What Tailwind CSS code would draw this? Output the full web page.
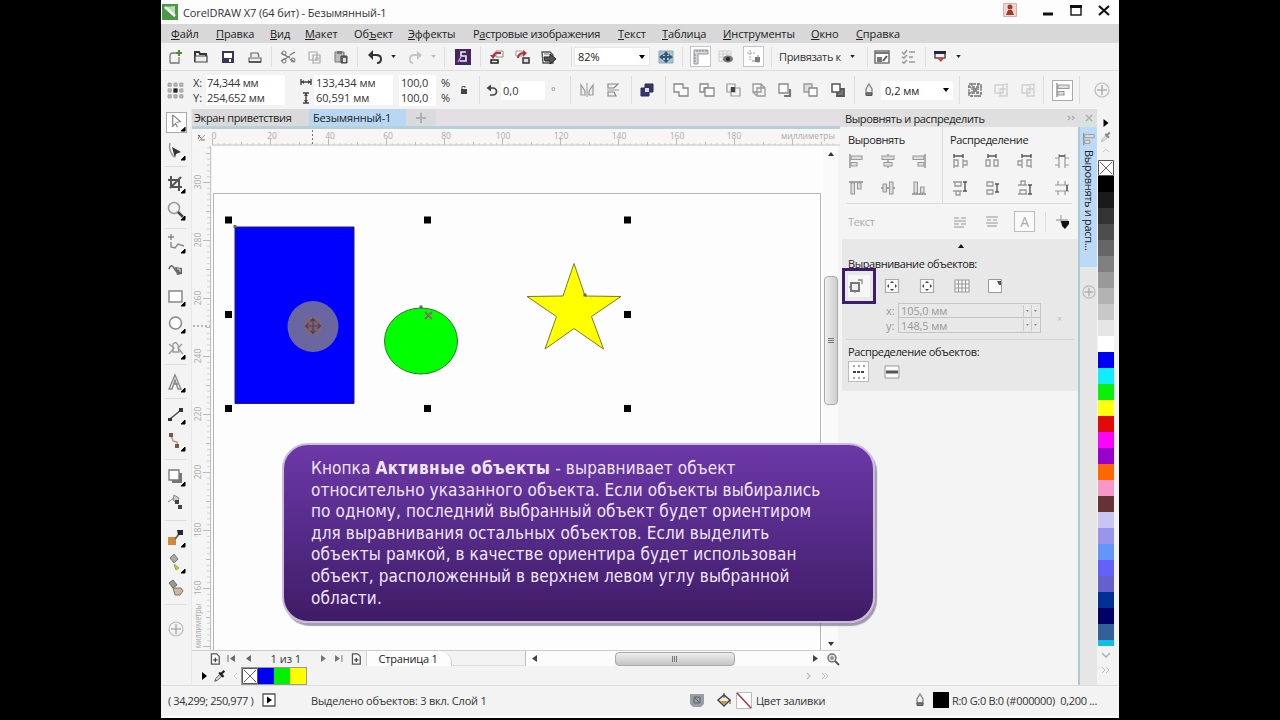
<!DOCTYPE html>
<html lang="ru">
<head>
  <meta charset="UTF-8" />
  <meta name="viewport" content="width=device-width, initial-scale=1.0" />
  <title>CorelDRAW X7 (64 бит) - Безымянный-1</title>
  <script src="https://cdn.jsdelivr.net/npm/@tailwindcss/browser@4"></script>
</head>
<body class="bg-black h-[720px] overflow-hidden">

  <!-- Icon sprites -->
  <svg class="hidden">
    <defs>
      <g id="fly"><path d="M20 16v4h-4z" fill="#000" stroke="#000"/></g>
      <symbol id="i-new" viewBox="0 0 16 16"><path d="M3 14V7q0-3 3-3h3M12 8v6H3" fill="none" stroke="#777" stroke-width="1.3"/><path d="M12 1v6M9 4h6" stroke="#4b8a3a" stroke-width="2"/></symbol>
      <symbol id="i-open" viewBox="0 0 16 16"><path d="M2 13V3h4l1 2h6v2" fill="none" stroke="#333" stroke-width="2"/><path d="M2 13V7h12v6z" fill="#eee" stroke="#444" stroke-width="1.2"/></symbol>
      <symbol id="i-save" viewBox="0 0 16 16"><path d="M3 3h10v10H3z" fill="#fff" stroke="#3a3658" stroke-width="2"/><path d="M4 9h8v4H4z" fill="#3a3658"/><path d="M9 10h2v3H9z" fill="#fff"/></symbol>
      <symbol id="i-print" viewBox="0 0 16 16"><path d="M4 8V4h7l1 4M2 9h12v4H2z" fill="#eee" stroke="#666" stroke-width="1.2"/><path d="M2 13h12" stroke="#444" stroke-width="1.6"/></symbol>
      <symbol id="i-cut" viewBox="0 0 16 16"><path d="M1 4l9 5M1 12l9-5M10 6l5-3M10 10l5 3" stroke="#777" stroke-width="1.4"/><circle cx="4" cy="4" r="2" fill="none" stroke="#777"/><circle cx="4" cy="12" r="2" fill="none" stroke="#777"/><circle cx="13" cy="11" r="2" fill="none" stroke="#777"/></symbol>
      <symbol id="i-copy" viewBox="0 0 16 16"><path d="M2 3h8v8H2zM6 6h7v8H6z" fill="#f5f5f5" stroke="#aaa" stroke-width="1.2"/><path d="M8 9h4M8 11h4" stroke="#aaa"/></symbol>
      <symbol id="i-paste" viewBox="0 0 16 16"><path d="M2 3h9v10H2z" fill="#bbb" stroke="#777"/><path d="M4 2h5v3H4z" fill="#777"/><path d="M8 7h6v7H8z" fill="#666" stroke="#444"/><path d="M10 9h3v4h-3z" fill="#ddd"/></symbol>
      <symbol id="i-undo" viewBox="0 0 16 16"><path d="M3 6h6q5 0 5 4t-4 4" fill="none" stroke="#333" stroke-width="2"/><path d="M6 1v10L1 6z" fill="#333"/></symbol>
      <symbol id="i-redo" viewBox="0 0 16 16"><path d="M13 6H7q-4 0-4 4t3 4" fill="none" stroke="#c4c4c4" stroke-width="1.8"/><path d="M10 2v9l5-5z" fill="#c4c4c4"/></symbol>
      <symbol id="i-search" viewBox="0 0 16 16"><path d="M0 0h16v16H0z" fill="#45245f"/><path d="M11 3H6v4h5v5H5" fill="none" stroke="#eee" stroke-width="1.6"/><path d="M3 13l3-5" stroke="#b494cf" stroke-width="1.5"/></symbol>
      <symbol id="i-import" viewBox="0 0 16 16"><path d="M7 2h7v6H7z" fill="#fff" stroke="#888"/><path d="M12 4H8q-3 0-4 4" fill="none" stroke="#b8303c" stroke-width="2"/><path d="M1 6h6l-3 4z" fill="#b8303c"/><path d="M2 11h7v3H2z" fill="#eee" stroke="#222" stroke-width="1.5"/></symbol>
      <symbol id="i-export" viewBox="0 0 16 16"><path d="M1 2h6v5H1z" fill="#fff" stroke="#999"/><path d="M3 9q0-4 5-5" fill="none" stroke="#b8303c" stroke-width="2"/><path d="M8 1l4 3-4 4z" fill="#b8303c"/><path d="M8 9h6v5H8z" fill="#ddd" stroke="#333" stroke-width="1.5"/></symbol>
      <symbol id="i-publish" viewBox="0 0 16 16"><path d="M1 3h8l3 3v8H2z" fill="#eee" stroke="#555" stroke-width="1.4"/><path d="M3 8h6V5l6 5-6 5v-3H4z" fill="#555" stroke="#222"/><path d="M3 5h5" stroke="#777"/></symbol>
      <symbol id="i-full" viewBox="0 0 16 16"><path d="M1 2h14v12H1z" fill="#a9c3d3" stroke="#8fa8b8"/><path d="M8 2l3 4H9v1h2V5l4 3-4 3V9H9v2h2l-3 3-3-3h2V9H5v2L1 8l4-3v2h2V6H5z" fill="#31596f"/></symbol>
      <symbol id="i-rulers" viewBox="0 0 16 16"><path d="M1 1h14v4H5v10H1z" fill="#d6d6dc" stroke="#999"/><path d="M4 1v2M7 1v2M10 1v2M13 1v2M1 6h2M1 9h2M1 12h2" stroke="#888"/></symbol>
      <symbol id="i-grid" viewBox="0 0 16 16"><path d="M1 2h12v10H1zM1 5h12M1 8h12M5 2v10M9 2v10" fill="none" stroke="#ccc"/><ellipse cx="10" cy="10" rx="5" ry="3.4" fill="#777"/><circle cx="10" cy="10" r="2" fill="#222"/></symbol>
      <symbol id="i-guides" viewBox="0 0 16 16"><path d="M4 1v10M1 4h9" stroke="#999" stroke-dasharray="2 1"/><path d="M9 8h5v5H9z" fill="#777"/><path d="M6 12h8M12 6v8" stroke="#888"/></symbol>
      <symbol id="i-options" viewBox="0 0 16 16"><path d="M1 2h14v12H1z" fill="#fff" stroke="#777" stroke-width="1.6"/><path d="M1 3h14v2H1zM3 8h5v5H3z" fill="#777"/><path d="M9 12l4-5" stroke="#555" stroke-width="2"/></symbol>
      <symbol id="i-list" viewBox="0 0 16 16"><path d="M1 3l2 2 3-4M1 8l2 1 3-3M1 13l2 1 3-3M8 3h6M8 8h4M8 13h6" fill="none" stroke="#999" stroke-width="1.5"/></symbol>
      <symbol id="i-launch" viewBox="0 0 16 16"><path d="M3 3h10v6H3z" fill="#eee" stroke="#555" stroke-width="1.6"/><path d="M2 2h12v3H2z" fill="#28233f"/><path d="M5 9h7l-3 4z" fill="#d0404a"/></symbol>
      <symbol id="i-origin" viewBox="0 0 16 16"><path d="M1 1h3v3H1zM6.500 1h3v3h-3zM12 1h3v3h-3zM1 6.500h3v3H1zM12 6.500h3v3h-3zM1 12h3v3H1zM6.500 12h3v3h-3zM12 12h3v3h-3z" fill="#bbb" stroke="#999" stroke-width=".8"/><path d="M6 6h4v4H6z" fill="#222"/></symbol>
      <symbol id="i-lock" viewBox="0 0 16 16"><path d="M5 7h6v5H5z" fill="#444"/><path d="M6 7V4.500h3V6" fill="none" stroke="#555"/></symbol>
      <symbol id="i-rotate" viewBox="0 0 16 16"><path d="M4 6h5a3.500 3.500 0 1 1 0 7H6" fill="none" stroke="#444" stroke-width="1.700"/><path d="M7 2.500v7L2.500 6z" fill="#444"/></symbol>
      <symbol id="i-mirh" viewBox="0 0 16 16"><path d="M2 3v10h4V9zM14 3v10h-4V9z" fill="#eee" stroke="#999" stroke-width="1.200"/><path d="M8 1v14" stroke="#999"/></symbol>
      <symbol id="i-mirv" viewBox="0 0 16 16"><path d="M3 2h10l-4 4H3zM3 14h8l-2-4H3z" fill="#eee" stroke="#888" stroke-width="1.200"/><path d="M2 8h12" stroke="#999"/></symbol>
      <symbol id="i-order" viewBox="0 0 16 16"><path d="M6 2h8v8H6z" fill="#39366e" stroke="#292858"/><path d="M2 6h8v8H2z" fill="#39366e" stroke="#292858"/><path d="M6 6h4v4H6z" fill="#dde" /></symbol>
      <symbol id="i-weld" viewBox="0 0 16 16"><path d="M1 2h9v4h5v8H6v-4H1z" fill="#fafafa" stroke="#888" stroke-width="1.300"/></symbol>
      <symbol id="i-trim" viewBox="0 0 16 16"><path d="M1 2h8v4H5v4H1z" fill="#fff" stroke="#888" stroke-width="1.300"/><path d="M6 6h9v8H6z" fill="#fafafa" stroke="#888" stroke-width="1.300"/></symbol>
      <symbol id="i-inter" viewBox="0 0 16 16"><path d="M2 2h8v8H2zM6 6h9v8H6z" fill="none" stroke="#999" stroke-width="1.200"/><path d="M6 5h4v5H6z" fill="#444"/></symbol>
      <symbol id="i-simp" viewBox="0 0 16 16"><path d="M2 2h8v8H2zM6 6h8v8H6zM10 2l4 4M2 10l4 4" fill="none" stroke="#999" stroke-width="1.300"/></symbol>
      <symbol id="i-fmb" viewBox="0 0 16 16"><path d="M2 2h9v9H2z" fill="#fafafa" stroke="#888" stroke-width="1.300"/><path d="M13 7v7H7" fill="none" stroke="#777" stroke-width="2.200"/></symbol>
      <symbol id="i-bmf" viewBox="0 0 16 16"><path d="M1 2h8v8H1z" fill="#ddd" stroke="#999" stroke-width="1.300"/><path d="M6 6h8v8H6z" fill="#fff" stroke="#888" stroke-width="1.300"/></symbol>
      <symbol id="i-bound" viewBox="0 0 16 16"><path d="M7 7h7v7H7z" fill="#777" stroke="#555" stroke-width="1.800"/><path d="M2 2h8v8H2z" fill="#fff" stroke="#555" stroke-width="1.500"/></symbol>
      <symbol id="i-pen" viewBox="0 0 16 16"><path d="M8 2l3 5v4H5V7z" fill="#eee" stroke="#888" stroke-width="1.400"/><path d="M5 11h6v2.500H5z" fill="#777" stroke="#555"/></symbol>
      <symbol id="i-group" viewBox="0 0 16 16"><path d="M2 2h12v12H2zM5 1v14M11 1v14M1 5h14M1 11h14" fill="none" stroke="#777" stroke-width="1.300" stroke-dasharray="3 1"/><path d="M6 6h4v4H6z" fill="#888"/></symbol>
      <symbol id="i-ungroup" viewBox="0 0 16 16"><path d="M2 3h8v8H2zM7 7h7v7H7zM9 3l5-1v4" fill="none" stroke="#cfcfcf" stroke-width="1.400"/></symbol>
      <symbol id="i-al" viewBox="0 0 16 16"><path d="M2 1v14" stroke="#888" stroke-width="1.300"/><path d="M3 3h11v3.500H3zM3 9.500h6v3.500H3z" fill="#ddd" stroke="#999" stroke-width="1.100"/></symbol>
      <symbol id="i-ac" viewBox="0 0 16 16"><path d="M8 1v14" stroke="#888" stroke-width="1.300"/><path d="M2 3h12v3.500H2zM4 9.500h8v3.500H4z" fill="#ddd" stroke="#999" stroke-width="1.100"/></symbol>
      <symbol id="i-dist" viewBox="0 0 16 16"><path d="M2 1v4M11 1v4M2 3h9" stroke="#555" stroke-width="1.400"/><path d="M2 6v9M2 7h4v6H2M11 6v9M11 8h4v4h-4" fill="none" stroke="#999" stroke-width="1.300"/></symbol>
      <symbol id="i-distc" viewBox="0 0 16 16"><path d="M4 1v4M12 1v4M4 3h8" stroke="#555" stroke-width="1.400"/><path d="M2 7h4v6H2zM10 7h4v6h-4z" fill="none" stroke="#999" stroke-width="1.300"/></symbol>
      <symbol id="i-dists" viewBox="0 0 16 16"><path d="M1 5h4v7H1M15 5h-4v7h4M5 1v14M11 1v14" fill="none" stroke="#999" stroke-width="1.200"/><path d="M5 3h6" stroke="#555" stroke-width="1.600"/></symbol>
      <symbol id="i-plus" viewBox="0 0 16 16"><circle cx="8" cy="8" r="7" fill="none" stroke="#b9b9b9" stroke-width="1.200"/><path d="M8 3v10M3 8h10" stroke="#b0b0b0" stroke-width="1.600"/></symbol>
      <symbol id="i-doc" viewBox="0 0 16 16"><path d="M4 2h6l3 3v9H4z" fill="#fff" stroke="#555" stroke-width="1.500"/><path d="M6 9h5M8.500 6.500v5" stroke="#444" stroke-width="1.500"/></symbol>
      <symbol id="i-drop" viewBox="0 0 16 16"><path d="M2 14l1-3 5-5 2 2-5 5z" fill="#ddd" stroke="#444"/><path d="M7 4l5 5M9 6l4-4" stroke="#222" stroke-width="2.600"/></symbol>
      <symbol id="i-x" viewBox="0 0 16 16"><path d="M.5.500h15v15H.5z" fill="#fff" stroke="#555"/><path d="M2 2l12 12M14 2L2 14" stroke="#666" stroke-width="1"/></symbol>
      <symbol id="i-page" viewBox="0 0 16 16"><path d="M1.500 1.500h13v13h-13z" fill="#fafafa" stroke="#aaa" stroke-width="1.200"/><path d="M8 3l2 2H6zM8 13l2-2H6zM3 8l2-2v4zM13 8l-2-2v4z" fill="#444"/></symbol>
    </defs>
  </svg>

  <!-- Application window -->
  <div class="ml-[161px] w-[958px] h-[718px] bg-[#fdfdfd] flex flex-col font-['Open_Sans','Noto_Sans',sans-serif] text-[11px] leading-none text-[#333] whitespace-nowrap overflow-hidden">

    <!-- Title bar -->
    <div class="h-6 shrink-0 flex items-center">
      <svg class="w-4 h-4 ml-px" viewBox="0 0 16 16"><path d="M0 0h16v16H0z" fill="#4b9a48"/><path d="M2 3l11 10V2" fill="#b9dcae"/><path d="M3 3l10 9" stroke="#fff" stroke-width="2.500"/></svg>
      <span class="ml-[5px] text-[11px] tracking-[-0.1px]">CorelDRAW X7 (64 бит) - Безымянный-1</span>
      <svg class="w-3.5 h-3.5 ml-auto mb-1" viewBox="0 0 14 14"><path d="M.5.500h13v13H.5z" fill="#f1d5cf" stroke="#d9b1aa"/><circle cx="7" cy="4" r="2.500" fill="#a03b32"/><path d="M3 12l2-5h4l2 5z" fill="#a03b32"/></svg>
      <svg class="w-[76px] h-4 ml-5 mr-1.5 mb-1" viewBox="0 0 76 16"><path d="M6 12h10" stroke="#111" stroke-width="3"/><path d="M34 4h10v9H34z" fill="none" stroke="#222" stroke-width="1.500"/><path d="M33 4.500h12" stroke="#111" stroke-width="3"/><path d="M62 4l10 9M72 4l-10 9" stroke="#111" stroke-width="2.200"/></svg>
    </div>

    <!-- Menu -->
    <div class="h-[19px] shrink-0 bg-[#d8d8d8] flex items-center pl-2.5 text-[#222] tracking-[-0.1px]">
      <span class="w-[45px]"><u>Ф</u>айл</span>
      <span class="w-[54px]"><u>П</u>равка</span>
      <span class="w-[35px]"><u>В</u>ид</span>
      <span class="w-[49px]"><u>М</u>акет</span>
      <span class="w-[54px]">Об<u>ъ</u>ект</span>
      <span class="w-[65px]"><u>Э</u>ффекты</span>
      <span class="w-[145px] tracking-[-0.28px]">Р<u>а</u>стровые изображения</span>
      <span class="w-11"><u>Т</u>екст</span>
      <span class="w-[61px]"><u>Т</u>аблица</span>
      <span class="w-[88px]"><u>И</u>нструменты</span>
      <span class="w-[45px]"><u>О</u>кно</span>
      <span><u>С</u>правка</span>
    </div>

    <!-- Standard toolbar -->
    <div class="h-7 shrink-0 bg-[#f3f3f3] border-b border-[#dcdcdc] flex items-center pl-1.5">
      <svg class="w-4 h-4 mr-2.5"><use href="#i-new"/></svg>
      <svg class="w-4 h-4 mr-[11px]"><use href="#i-open"/></svg>
      <svg class="w-4 h-4 mr-[11px]"><use href="#i-save"/></svg>
      <svg class="w-4 h-4 mr-2"><use href="#i-print"/></svg>
      <div class="w-px h-5 bg-[#ddd] mr-2"></div>
      <svg class="w-4 h-4 mr-[11px]"><use href="#i-cut"/></svg>
      <svg class="w-4 h-4 mr-2.5"><use href="#i-copy"/></svg>
      <svg class="w-4 h-4 mr-2"><use href="#i-paste"/></svg>
      <div class="w-px h-5 bg-[#ddd] mr-[9px]"></div>
      <svg class="w-4 h-4 mr-2"><use href="#i-undo"/></svg>
      <svg class="w-[5px] h-[3px] mr-[11px]" viewBox="0 0 6 4"><path d="M0 0h6L3 4z" fill="#222"/></svg>
      <svg class="w-4 h-4 mr-2"><use href="#i-redo"/></svg>
      <svg class="w-[5px] h-[3px] mr-2" viewBox="0 0 6 4"><path d="M0 0h6L3 4z" fill="#bbb"/></svg>
      <div class="w-px h-5 bg-[#ddd] mr-2.5"></div>
      <svg class="w-4 h-4 mr-[9px]"><use href="#i-search"/></svg>
      <div class="w-px h-5 bg-[#ddd] mr-2"></div>
      <svg class="w-4 h-4 mr-2.5"><use href="#i-import"/></svg>
      <svg class="w-4 h-4 mr-2.5"><use href="#i-export"/></svg>
      <svg class="w-4 h-4 mr-3.5"><use href="#i-publish"/></svg>
      <div class="w-px h-5 bg-[#ddd] mr-0.5"></div>
      <div class="w-[76px] h-[19px] bg-white border border-[#e6e6e6] flex items-center justify-between pl-[3px] pr-1 text-[#222]">82%<svg class="w-1.5 h-1" viewBox="0 0 6 4"><path d="M0 0h6L3 4z" fill="#000"/></svg></div>
      <svg class="w-4 h-4 ml-2 mr-2"><use href="#i-full"/></svg>
      <div class="w-px h-5 bg-[#ddd] mr-[7px]"></div>
      <div class="w-[21px] h-[21px] bg-white border border-[#c4c4cc] flex items-center justify-center"><svg class="w-4 h-4"><use href="#i-rulers"/></svg></div>
      <svg class="w-4 h-4 ml-[7px] mr-[9px]"><use href="#i-grid"/></svg>
      <div class="w-[21px] h-[21px] bg-white border border-[#c4c4cc] flex items-center justify-center"><svg class="w-4 h-4"><use href="#i-guides"/></svg></div>
      <div class="w-px h-5 bg-[#ddd] mx-[7px]"></div>
      <span class="w-[71px] tracking-[-0.35px]">Привязать к</span>
      <svg class="w-[5px] h-[3px] mr-3" viewBox="0 0 6 4"><path d="M0 0h6L3 4z" fill="#222"/></svg>
      <div class="w-px h-5 bg-[#ddd] mr-1.5"></div>
      <svg class="w-4 h-4 mr-[11px]"><use href="#i-options"/></svg>
      <svg class="w-4 h-4 mr-2"><use href="#i-list"/></svg>
      <div class="w-px h-5 bg-[#ddd] mr-1.5"></div>
      <svg class="w-4 h-4 mr-2"><use href="#i-launch"/></svg>
      <svg class="w-[5px] h-[3px]" viewBox="0 0 6 4"><path d="M0 0h6L3 4z" fill="#222"/></svg>
    </div>

    <!-- Property bar -->
    <div class="h-[38px] shrink-0 bg-[#f3f3f3] flex items-center pl-1.5">
      <svg class="w-[17px] h-[17px] mr-[9px]"><use href="#i-origin"/></svg>
      <div class="w-[92px] h-[31px] flex flex-col justify-around">
        <div class="flex items-center h-[15px]"><span class="w-[13px]">X:</span><span class="flex-1 bg-white h-full leading-[15px] pl-px tracking-[-0.2px]">74,344 мм</span></div>
        <div class="flex items-center h-[15px]"><span class="w-[13px]">Y:</span><span class="flex-1 bg-white h-full leading-[15px] pl-px tracking-[-0.2px]">254,652 мм</span></div>
      </div>
      <div class="w-[93px] h-[31px] flex flex-col justify-around ml-[15px]">
        <div class="flex items-center h-[15px]"><svg class="w-3 h-3 mr-0.5" viewBox="0 0 12 12"><path d="M1 3v6M11 3v6M1 6h10" stroke="#444" stroke-width="1.400"/><path d="M4 4v4L1 6zM8 4v4l3-2z" fill="#444"/></svg><span class="flex-1 bg-white h-full leading-[15px] pl-0.5">133,434 мм</span></div>
        <div class="flex items-center h-[15px]"><svg class="w-3 h-3 mr-0.5" viewBox="0 0 12 12"><path d="M3 1h6M3 11h6M6 1v10" stroke="#444" stroke-width="1.400"/><path d="M4 4h4L6 1zM4 8h4l-2 3z" fill="#444"/></svg><span class="flex-1 bg-white h-full leading-[15px] pl-0.5">60,591 мм</span></div>
      </div>
      <div class="w-[37px] h-[31px] flex flex-col justify-around ml-1.5 bg-white pl-0.5 tracking-[-0.2px]"><span>100,0</span><span>100,0</span></div>
      <div class="w-[15px] h-[31px] flex flex-col justify-around ml-[5px]"><span>%</span><span>%</span></div>
      <svg class="w-4 h-4 mr-[7px]"><use href="#i-lock"/></svg>
      <div class="w-px h-7 bg-[#ddd] mr-1"></div>
      <svg class="w-4 h-4 mr-px"><use href="#i-rotate"/></svg>
      <div class="w-11 h-[19px] bg-white leading-[19px] pl-0.5">0,0</div>
      <span class="w-[19px] pl-1.5 text-[#888]">°</span>
      <div class="w-px h-7 bg-[#ddd] ml-1.5 mr-2"></div>
      <svg class="w-4 h-4 mr-2.5"><use href="#i-mirh"/></svg>
      <svg class="w-4 h-4 mr-2.5"><use href="#i-mirv"/></svg>
      <div class="w-px h-7 bg-[#ddd] mr-[7px]"></div>
      <svg class="w-4 h-4 mr-2.5"><use href="#i-order"/></svg>
      <div class="w-px h-7 bg-[#ddd] mr-[7px]"></div>
      <svg class="w-4 h-4 mr-2.5"><use href="#i-weld"/></svg>
      <svg class="w-4 h-4 mr-2.5"><use href="#i-trim"/></svg>
      <svg class="w-4 h-4 mr-2.5"><use href="#i-inter"/></svg>
      <svg class="w-4 h-4 mr-2.5"><use href="#i-simp"/></svg>
      <svg class="w-4 h-4 mr-2.5"><use href="#i-fmb"/></svg>
      <svg class="w-4 h-4 mr-[11px]"><use href="#i-bmf"/></svg>
      <svg class="w-4 h-4 mr-2"><use href="#i-bound"/></svg>
      <div class="w-px h-7 bg-[#ddd] mr-1.5"></div>
      <svg class="w-4 h-4 mr-1"><use href="#i-pen"/></svg>
      <div class="w-[72px] h-[19px] bg-white flex items-center justify-between pl-1 pr-1 text-[#222]">0,2 мм<svg class="w-1.5 h-1" viewBox="0 0 6 4"><path d="M0 0h6L3 4z" fill="#000"/></svg></div>
      <div class="w-px h-7 bg-[#ddd] ml-1.5 mr-[7px]"></div>
      <svg class="w-4 h-4 mr-2.5"><use href="#i-group"/></svg>
      <svg class="w-4 h-4 mr-[11px]"><use href="#i-ungroup"/></svg>
      <svg class="w-4 h-4 mr-[7px]"><use href="#i-ungroup"/></svg>
      <div class="w-px h-7 bg-[#ddd] mr-2"></div>
      <div class="w-[21px] h-[21px] bg-white border border-[#aaa] flex items-center justify-center"><svg class="w-4 h-4"><use href="#i-al"/></svg></div>
      <div class="w-px h-7 bg-[#ddd] mx-1.5"></div>
      <svg class="w-4 h-4 ml-2"><use href="#i-plus"/></svg>
    </div>

    <!-- Work area -->
    <div class="h-[576px] shrink-0 flex">

      <!-- Toolbox -->
      <div class="w-[31px] shrink-0 bg-[#f3f3f3] flex flex-col items-center border-r border-[#e8e8e8]">
        <div class="w-[21px] h-[21px] mt-[3px] bg-white border border-[#aaa]"><svg class="w-[21px] h-[21px] -ml-px -mt-px" viewBox="0 0 22 22"><path d="M7 3v12l3-3 2 4M7 3l8 7-4 1" fill="none" stroke="#888" stroke-width="1.300"/><use href="#fly"/></svg></div>
        <svg class="w-[22px] h-[22px] mt-[7px]" viewBox="0 0 22 22"><path d="M5 3q-2 7 4 14" fill="none" stroke="#999" stroke-width="1.500"/><path d="M7 7l9 5-5 2-1 4z" fill="#333"/><use href="#fly"/></svg>
        <div class="w-[22px] h-px bg-[#ddd] mt-1"></div>
        <svg class="w-[22px] h-[22px] mt-1.5" viewBox="0 0 22 22"><path d="M6 3v11h11M3 7h11v11M5 15L16 4" fill="none" stroke="#555" stroke-width="2"/><use href="#fly"/></svg>
        <svg class="w-[22px] h-[22px] mt-[5px]" viewBox="0 0 22 22"><circle cx="9" cy="8" r="5.500" fill="#f5f5f5" stroke="#999" stroke-width="1.500"/><path d="M13 12l5 5" stroke="#444" stroke-width="2.500"/><use href="#fly"/></svg>
        <div class="w-[22px] h-px bg-[#ddd] mt-1.5"></div>
        <svg class="w-[22px] h-[22px] mt-1" viewBox="0 0 22 22"><path d="M6 1v6M3 4h6" stroke="#888" stroke-width="1.400"/><path d="M6 9v5l4 1 3-4 6 2" fill="none" stroke="#888" stroke-width="1.400"/><use href="#fly"/></svg>
        <svg class="w-[22px] h-[22px] mt-1" viewBox="0 0 22 22"><path d="M4 10q2-6 5-1t4 4" fill="none" stroke="#666" stroke-width="1.600"/><path d="M10 8l7 1v6l-5 1z" fill="#666"/><path d="M12 10h3v3" fill="none" stroke="#ddd"/></svg>
        <svg class="w-[22px] h-[22px] mt-[5px]" viewBox="0 0 22 22"><path d="M4 5h13v11H4z" fill="#fff" stroke="#888" stroke-width="1.500"/><use href="#fly"/></svg>
        <svg class="w-[22px] h-[22px] mt-[5px]" viewBox="0 0 22 22"><circle cx="10.500" cy="10" r="6" fill="#fff" stroke="#888" stroke-width="1.500"/><use href="#fly"/></svg>
        <svg class="w-[22px] h-[22px] mt-1" viewBox="0 0 22 22"><path d="M4 5l5 4-5 6M17 5l-4 4 5 6M8 5q3-3 5 1l1 7H8z" fill="none" stroke="#999" stroke-width="1.300"/><use href="#fly"/></svg>
        <div class="w-[22px] h-px bg-[#ddd] mt-[3px]"></div>
        <svg class="w-[22px] h-[22px] mt-[7px]" viewBox="0 0 22 22"><path d="M4 17L10 3l6 14h-3l-3-9-3 9zM8 12h5" fill="#eee" stroke="#888" stroke-width="1.300"/><use href="#fly"/></svg>
        <div class="w-[22px] h-px bg-[#ddd] mt-1"></div>
        <svg class="w-[22px] h-[22px] mt-[5px]" viewBox="0 0 22 22"><path d="M5 15L16 6" stroke="#444" stroke-width="1.400"/><path d="M3 14h4v3H3zM14 4h4v4h-4z" fill="#333"/><use href="#fly"/></svg>
        <svg class="w-[22px] h-[22px] mt-[5px]" viewBox="0 0 22 22"><path d="M6 4l2 6 4 1 1 5" fill="none" stroke="#b09080" stroke-width="1.300"/><path d="M4 2h4v4H4zM10 13h4v4h-4z" fill="#7b5548"/><use href="#fly"/></svg>
        <div class="w-[22px] h-px bg-[#ddd] mt-1.5"></div>
        <svg class="w-[22px] h-[22px] mt-1.5" viewBox="0 0 22 22"><path d="M7 7h10v10H7z" fill="#777"/><path d="M4 4h10v10H4z" fill="#fff" stroke="#777" stroke-width="1.300"/><use href="#fly"/></svg>
        <svg class="w-[22px] h-[22px] mt-1" viewBox="0 0 22 22"><path d="M3 10l6-4M9 3l5 3-2 5-4-3z" fill="#ccc" stroke="#888"/><path d="M10 8h4v4h-4zM13 13h4v4h-4z" fill="#444"/></svg>
        <div class="w-[22px] h-px bg-[#ddd] mt-1.5"></div>
        <svg class="w-[22px] h-[22px] mt-1.5" viewBox="0 0 22 22"><path d="M3 10h8v8H3z" fill="#d08a3e"/><path d="M10 12l4-5" stroke="#666" stroke-width="2"/><path d="M12 3h6v5h-5z" fill="#27243a"/><use href="#fly"/></svg>
        <svg class="w-[22px] h-[22px] mt-1" viewBox="0 0 22 22"><path d="M5 5l4-4 4 5-4 4z" fill="#aaa" stroke="#777"/><path d="M9 11l5 4-3 2z" fill="#c9cf4c" stroke="#a0a040"/><use href="#fly"/></svg>
        <svg class="w-[22px] h-[22px] mt-[3px]" viewBox="0 0 22 22"><path d="M4 5l4-3 4 5-4 3z" fill="#999" stroke="#665"/><path d="M8 10h8l2 3-3 4h-5z" fill="#c8b8a0" stroke="#85735c"/></svg>
        <div class="w-[22px] h-px bg-[#ddd] mt-1"></div>
        <svg class="w-4 h-4 mt-4"><use href="#i-plus"/></svg>
      </div>

      <!-- Document column -->
      <div class="w-[648px] shrink-0 flex flex-col bg-[#f3f3f3]">
        <div class="h-[17px] shrink-0 flex items-center bg-[#e3dfe2] text-[#222]">
          <div class="w-[117px] h-full bg-[#dadada] pl-0.5 leading-[18px] tracking-[-0.35px]">Экран приветствия</div>
          <div class="w-[97px] h-full bg-[#b9d7f3] pl-1 leading-[18px] tracking-[-0.15px]">Безымянный-1</div>
          <div class="w-[30px] h-full bg-[#d9dade] flex items-center justify-center"><svg class="w-3 h-3" viewBox="0 0 12 12"><path d="M6 1v10M1 6h10" stroke="#b5acb0" stroke-width="2"/></svg></div>
        </div>
        <div class="h-[3px] shrink-0 bg-[#b5d0d6]"></div>
        <!-- Horizontal ruler -->
        <svg class="w-[648px] h-[17px] shrink-0 font-['Open_Sans',sans-serif]" viewBox="0 0 648 17">
          <defs>
            <pattern id="tick" x="20" y="0" width="5.800" height="17" patternUnits="userSpaceOnUse"><path d="M.5 14v2" stroke="#d0d0d0"/></pattern>
            <pattern id="mtick" x="20" y="0" width="58" height="17" patternUnits="userSpaceOnUse"><path d="M.5 10v6M29.500 13v3" stroke="#bbb"/></pattern>
          </defs>
          <rect width="648" height="17" fill="#f7f6f4"/>
          <rect x="20" width="626" height="17" fill="url(#tick)"/>
          <rect x="20" width="626" height="17" fill="url(#mtick)"/>
          <path d="M20 16h628" stroke="#c4c4c4"/>
          <path d="M120.500 1v15" stroke="#777" stroke-dasharray="2 2"/>
          <g fill="#aaa" font-size="8.500" text-anchor="middle">
            <text x="22" y="10">0</text><text x="80" y="10">20</text><text x="138" y="10">40</text><text x="196" y="10">60</text><text x="254" y="10">80</text><text x="311" y="10">100</text><text x="369" y="10">120</text><text x="427" y="10">140</text><text x="485" y="10">160</text><text x="542" y="10">180</text>
            <text x="616" y="10" textLength="54">миллиметры</text>
          </g>
          <path d="M6 6l4 4M6 10l2-4M9 11h4" stroke="#666"/><path d="M7 12l6-6" stroke="#999"/>
        </svg>

        <div class="h-[504px] shrink-0 flex">
          <!-- Vertical ruler -->
          <svg class="w-5 h-[504px] shrink-0 font-['Open_Sans',sans-serif]" viewBox="0 0 20 504">
            <defs>
              <pattern id="vtick" x="0" y="36" width="20" height="5.800" patternUnits="userSpaceOnUse"><path d="M15 .5h3" stroke="#d0d0d0"/></pattern>
              <pattern id="vmtick" x="0" y="36" width="20" height="58" patternUnits="userSpaceOnUse"><path d="M11 .5h7M14 29.500h4" stroke="#bbb"/></pattern>
            </defs>
            <rect width="20" height="504" fill="#f5f5f5"/>
            <rect width="20" height="504" fill="url(#vtick)"/>
            <rect width="20" height="504" fill="url(#vmtick)"/>
            <path d="M18.500 0v504" stroke="#c4c4c4"/>
            <path d="M1 180h17" stroke="#777" stroke-dasharray="2 2"/>
            <g fill="#aaa" font-size="8.500" text-anchor="middle">
              <text transform="translate(9 36) rotate(-90)">300</text><text transform="translate(9 94) rotate(-90)">280</text><text transform="translate(9 152) rotate(-90)">260</text><text transform="translate(9 210) rotate(-90)">240</text><text transform="translate(9 268) rotate(-90)">220</text><text transform="translate(9 326) rotate(-90)">200</text><text transform="translate(9 384) rotate(-90)">180</text><text transform="translate(9 442) rotate(-90)">160</text>
              <text transform="translate(9 480) rotate(-90)" textLength="44" lengthAdjust="spacingAndGlyphs">миллиметры</text>
            </g>
          </svg>

          <!-- Canvas -->
          <div class="relative w-[611px] h-[504px] shrink-0 bg-[#fdfdfd]">
            <svg class="w-[611px] h-[504px]" viewBox="212 146 611 504">
              <path d="M213.500 650V193.500H820.500V650" fill="none" stroke="#b4b4b4"/>
              <path d="M235 227h119v176.500H235z" fill="#00f" stroke="#26205c"/>
              <circle cx="313" cy="326.500" r="25.500" fill="#6a66a0"/>
              <circle cx="313" cy="326" r="8" fill="#7c6270" stroke="#9a6a60"/>
              <path d="M313 319v14M306 326h14M310.500 321.500l2.500-3 2.500 3M310.500 330.500l2.500 3 2.500-3M308.500 323.500l-3 2.500 3 2.500M317.500 323.500l3 2.500-3 2.500" fill="none" stroke="#4c4058" stroke-width="1.200"/>
              <ellipse cx="421" cy="341" rx="36.500" ry="33" fill="#0f0" stroke="#2b7a2b"/>
              <path d="M425 312l7 7M432 312l-7 7" stroke="#8a6a6a" stroke-width="1.800"/>
              <path d="M574 263.500l11 32.500 36 .5-29.500 20 12 32.500-29.500-20.500-29 20.500 11.500-32.500-29.500-20 36-.5z" fill="#ff0" stroke="#7c7a2c"/>
              <path d="M233.500 225h3v3h-3zM419.500 305.500h3v3h-3zM583.500 293.500h3v3h-3z" fill="#666"/>
              <path d="M225 216.500h7v7h-7zM424 216.500h7v7h-7zM624 216.500h7v7h-7zM225 311h7v7h-7zM624 311h7v7h-7zM225 405h7v7h-7zM424 405h7v7h-7zM624 405h7v7h-7z" fill="#000"/>
            </svg>
            <!-- Hint callout -->
            <div class="absolute z-10 left-[70px] top-[297px] w-[593px] h-[180px] rounded-[26px] border-2 border-[#cdb9e2] bg-linear-to-b from-[#6c38a8] via-[#552b88] to-[#3f1c66] shadow-[2px_3px_1px_rgba(90,80,105,0.55)] pl-[27px] pt-[13px] font-['DejaVu_Sans_Condensed','DejaVu_Sans',sans-serif] text-[17px] tracking-[0.1px] leading-[21.600px] text-[#f0e6fa]">
              Кнопка <b class="tracking-[0.45px]">Активные объекты</b> - выравнивает объект<br>
              относительно указанного объекта. Если объекты выбирались<br>
              по одному, последний выбранный объект будет ориентиром<br>
              для выравнивания остальных объектов. Если выделить<br>
              объекты рамкой, в качестве ориентира будет использован<br>
              объект, расположенный в верхнем левом углу выбранной<br>
              области.
            </div>
          </div>

          <!-- Vertical scrollbar -->
          <div class="w-[15px] shrink-0 bg-[#fafafa] flex flex-col items-center pt-1.5 pb-1">
            <svg class="w-1.5 h-1" viewBox="0 0 6 4"><path d="M0 4h6L3 0z" fill="#333"/></svg>
            <div class="w-3.5 h-[129px] mt-[120px] border border-[#aaa] rounded-sm bg-linear-to-r from-[#eee] to-[#ccc] flex flex-col items-center justify-center gap-px"><i class="w-1.5 h-px bg-[#777]"></i><i class="w-1.5 h-px bg-[#777]"></i><i class="w-1.5 h-px bg-[#777]"></i></div>
            <svg class="w-1.5 h-1 mt-auto" viewBox="0 0 6 4"><path d="M0 0h6L3 4z" fill="#333"/></svg>
          </div>
        </div>

        <!-- Page navigator -->
        <div class="h-4 shrink-0 flex items-center border-t border-[#ccc] pl-4">
          <svg class="w-3.5 h-3.5"><use href="#i-doc"/></svg>
          <svg class="w-[9px] h-[7px] ml-[5px]" viewBox="0 0 9 7"><path d="M1 0v7" stroke="#666"/><path d="M8 0v7L3 3.500z" fill="#666"/></svg>
          <svg class="w-[5px] h-[7px] ml-2.5" viewBox="0 0 5 7"><path d="M5 0v7L0 3.500z" fill="#666"/></svg>
          <span class="w-[69px] text-center ml-px">1 из 1</span>
          <svg class="w-[5px] h-[7px] ml-px" viewBox="0 0 5 7"><path d="M0 0v7l5-3.500z" fill="#777"/></svg>
          <svg class="w-[9px] h-[7px] ml-2" viewBox="0 0 9 7"><path d="M8 0v7" stroke="#777"/><path d="M1 0v7l5-3.500z" fill="#777"/></svg>
          <svg class="w-3.5 h-3.5 ml-1.5"><use href="#i-doc"/></svg>
          <div class="w-[87px] h-full ml-[3px] bg-[#fdfdfd] border-x border-[#d0d0d0] rounded-tr-xl pl-3 leading-[15px] text-[#222] tracking-[-0.2px]">Страница 1</div>
          <div class="w-[75px] h-full border-r border-[#bbb] border-b border-b-[#ddd]"></div>
          <div class="flex-1 h-full bg-[#fcfcfc] flex items-center pl-1.5">
            <svg class="w-[5px] h-[7px]" viewBox="0 0 5 7"><path d="M5 0v7L0 3.500z" fill="#444"/></svg>
            <div class="w-[120px] h-3.5 ml-[78px] border border-[#aaa] rounded-sm bg-linear-to-b from-[#eee] to-[#c4c4c4] flex items-center justify-center gap-px"><i class="w-px h-1.5 bg-[#777]"></i><i class="w-px h-1.5 bg-[#777]"></i><i class="w-px h-1.5 bg-[#777]"></i></div>
            <svg class="w-[5px] h-[7px] ml-[78px]" viewBox="0 0 5 7"><path d="M0 0v7l5-3.500z" fill="#444"/></svg>
            <svg class="w-3.5 h-3.5 ml-2" viewBox="0 0 14 14"><circle cx="6" cy="6" r="4" fill="#ddd" stroke="#777" stroke-width="1.500"/><path d="M4 6h4M6 4v4" stroke="#777"/><path d="M9 9l4 4" stroke="#555" stroke-width="2"/></svg>
          </div>
        </div>

        <!-- Document palette -->
        <div class="flex-1 flex items-center pl-2.5">
          <svg class="w-[5px] h-2" viewBox="0 0 5 8"><path d="M0 0v8l5-4z" fill="#000"/></svg>
          <svg class="w-3.5 h-3.5 ml-1.5"><use href="#i-drop"/></svg>
          <svg class="w-[5px] h-2 ml-1.5 mr-[3px]" viewBox="0 0 5 8"><path d="M4 1L1 4l3 3" fill="none" stroke="#ccc"/></svg>
          <div class="flex border border-[#999]">
            <svg class="w-4 h-4"><use href="#i-x"/></svg>
            <div class="w-4 h-4 bg-[#0000f0]"></div>
            <div class="w-4 h-4 bg-[#00f000]"></div>
            <div class="w-4 h-4 bg-[#ffff00]"></div>
          </div>
          <svg class="w-6 h-2 ml-auto mr-2.5" viewBox="0 0 24 8"><path d="M1 1l3 3-3 3" fill="none" stroke="#bbb" stroke-width="1.300"/><path d="M16 1l3 3-3 3M19 1l3 3-3 3" fill="none" stroke="#bbb"/></svg>
        </div>
      </div>

      <!-- Align and distribute docker -->
      <div class="w-[240px] shrink-0 flex flex-col bg-[#f4f4f4] border-r-2 border-[#a9cbd3] tracking-[-0.35px]">
        <div class="h-[18px] w-[257px] shrink-0 bg-[#dfdfdf] flex items-center pl-[5px] text-[#222]">
          Выровнять и распределить
          <svg class="w-[26px] h-2 ml-auto mr-1" viewBox="0 0 26 8"><path d="M1 2l2 2-2 2M5 2l2 2-2 2M19 1l6 6M25 1l-6 6" fill="none" stroke="#aaa" stroke-width="1.300"/></svg>
        </div>
        <div class="h-[77px] shrink-0 mx-1.5 flex border-b border-[#ddd]">
          <div class="w-[97px] border-r border-[#ddd] pt-[7px] pl-0.5">
            <div class="text-[#222]">Выровнять</div>
            <div class="grid grid-cols-[32px_31px_32px] gap-y-[11px] mt-2">
              <svg class="w-4 h-4"><use href="#i-al"/></svg>
              <svg class="w-4 h-4"><use href="#i-ac"/></svg>
              <svg class="w-4 h-4 -scale-x-100"><use href="#i-al"/></svg>
              <svg class="w-4 h-4 rotate-90 -scale-y-100"><use href="#i-al"/></svg>
              <svg class="w-4 h-4 rotate-90"><use href="#i-ac"/></svg>
              <svg class="w-4 h-4 -rotate-90"><use href="#i-al"/></svg>
            </div>
          </div>
          <div class="flex-1 pt-[7px] pl-[7px]">
            <div class="text-[#222]">Распределение</div>
            <div class="grid grid-cols-[32px_33px_37px_16px] gap-y-[11px] mt-2 pl-0.5">
              <svg class="w-4 h-4"><use href="#i-dist"/></svg>
              <svg class="w-4 h-4"><use href="#i-distc"/></svg>
              <svg class="w-4 h-4 -scale-x-100"><use href="#i-dist"/></svg>
              <svg class="w-4 h-4"><use href="#i-dists"/></svg>
              <svg class="w-4 h-4 rotate-90"><use href="#i-dist"/></svg>
              <svg class="w-4 h-4 rotate-90"><use href="#i-distc"/></svg>
              <svg class="w-4 h-4 rotate-90 -scale-x-100"><use href="#i-dist"/></svg>
              <svg class="w-4 h-4 rotate-90"><use href="#i-dists"/></svg>
            </div>
          </div>
        </div>
        <div class="h-[35px] shrink-0 flex items-center pl-2 text-[#aaa]">
          <span class="w-[104px]">Текст</span>
          <svg class="w-4 h-4" viewBox="0 0 16 16"><path d="M2 4h5M9 4h5M2 7h12M2 10h5M9 10h5M2 13h10" stroke="#c4c4c4" stroke-width="2"/></svg>
          <svg class="w-4 h-4 ml-4" viewBox="0 0 16 16"><path d="M2 3h12M3 6h4M9 6h4M2 9h12M3 12h10" stroke="#c4c4c4" stroke-width="2"/></svg>
          <div class="w-[21px] h-[21px] ml-3.5 bg-[#fafafa] border border-[#bbb] flex items-center justify-center text-[14px]">A</div>
          <div class="w-px h-5 bg-[#ddd] ml-2.5"></div>
          <svg class="w-4 h-4 ml-[9px]" viewBox="0 0 16 16"><path d="M6 1v8M1 6h12" stroke="#aaa" stroke-width="1.300"/><path d="M6 7h8v3l-4 5-3-3z" fill="#111"/></svg>
        </div>

        <div class="h-[152px] shrink-0 ml-0.5 bg-[#e8e8e8] flex flex-col">
          <svg class="w-1.5 h-1 ml-[116px] mt-[5px]" viewBox="0 0 6 4"><path d="M0 4h6L3 0z" fill="#111"/></svg>
          <div class="mt-2.5 pl-1.5 text-[#222] tracking-[-0.4px]">Выравнивание объектов:</div>
          <div class="flex items-center h-[34px]">
            <div class="z-10 w-[34px] h-9 shrink-0 border-[3px] border-[#3d1b70] flex items-center justify-center"><div class="w-[22px] h-[22px] bg-[#f6f6f6] flex items-center justify-start"><svg class="w-4 h-4" viewBox="0 0 16 16"><path d="M3 5h8v8H3z" fill="#eee" stroke="#777" stroke-width="2"/><path d="M10 2h4v4M1 9h2M7 13v2" fill="none" stroke="#888" stroke-width="1.300"/></svg></div></div>
            <svg class="w-4 h-4 ml-2"><use href="#i-page"/></svg>
            <svg class="w-4 h-4 ml-[19px]"><use href="#i-page"/></svg>
            <svg class="w-4 h-4 ml-[19px]" viewBox="0 0 16 16"><path d="M1 2h14v12H1z" fill="#fafafa"/><path d="M1 2h14v12H1zM1 6h14M1 10h14M4.500 2v12M8 2v12M11.500 2v12" fill="none" stroke="#999" stroke-width="1.100"/></svg>
            <svg class="w-4 h-4 ml-[17px]" viewBox="0 0 16 16"><path d="M1.500 1.500h13v13h-13z" fill="#fafafa" stroke="#999"/><path d="M10 3h4v4h-2z" fill="#555"/></svg>
          </div>
          <div class="ml-11 flex items-center text-[#999] tracking-[-0.1px]">
            <div class="w-3 flex flex-col gap-1"><span>x:</span><span>y:</span></div>
            <div class="w-[143px] border border-[#c4c4c4]">
              <div class="h-3.5 border-b border-[#c4c4c4] flex items-center justify-between pl-0.5 leading-none">105,0 мм<svg class="w-[17px] h-3" viewBox="0 0 17 12"><path d="M.5 0v12M8.500 0v12" stroke="#ccc"/><path d="M3 5h3L4.500 7zM11 5h3l-1.500 2z" fill="#888"/></svg></div>
              <div class="h-3.5 flex items-center justify-between pl-0.5 leading-none">148,5 мм<svg class="w-[17px] h-3" viewBox="0 0 17 12"><path d="M.5 0v12M8.500 0v12" stroke="#ccc"/><path d="M3 5h3L4.500 7zM11 5h3l-1.500 2z" fill="#888"/></svg></div>
            </div>
            <span class="ml-4 text-[9px] text-[#bbb]">×</span>
          </div>
          <div class="h-px bg-[#d4d4d4] mx-1 mt-1.5"></div>
          <div class="mt-1.5 pl-1.5 text-[#222] tracking-[-0.35px]">Распределение объектов:</div>
          <div class="flex items-center pl-1.5 mt-1">
            <div class="w-[21px] h-[21px] bg-white border border-[#bbb] flex items-center justify-center"><svg class="w-4 h-4" viewBox="0 0 16 16"><path d="M2 2h2M7 2h2M12 2h2M2 14h2M7 14h2M12 14h2" stroke="#888" stroke-width="1.500"/><path d="M2 8h12" stroke="#444" stroke-width="2" stroke-dasharray="3 1"/></svg></div>
            <svg class="w-4 h-4 ml-[15px]" viewBox="0 0 16 16"><path d="M1 2h14v12H1z" fill="#fafafa" stroke="#999"/><path d="M2 8h12" stroke="#555" stroke-width="3"/></svg>
          </div>
        </div>
      </div>

      <!-- Docker tabs -->
      <div class="w-[17px] shrink-0 bg-[#e6e6e6] mt-[18px] flex flex-col items-center">
        <div class="w-full h-[140px] bg-[#bcdaf7] flex flex-col items-center pt-[5px] gap-1">
          <svg class="w-3.5 h-3.5"><use href="#i-al"/></svg>
          <span class="[writing-mode:vertical-rl] text-[#222] leading-[14px] tracking-[-0.3px]">Выровнять и расп...</span>
        </div>
        <svg class="w-3.5 h-3.5 mt-[18px]"><use href="#i-plus"/></svg>
      </div>

      <!-- Color palette -->
      <div class="w-[22px] shrink-0 bg-[#f3f3f3] flex flex-col items-center pr-1">
        <svg class="w-1.5 h-2 mt-2.5 shrink-0" viewBox="0 0 5 8"><path d="M0 0v8l5-4z" fill="#000"/></svg>
        <svg class="w-3 h-3 mt-1 shrink-0 opacity-50"><use href="#i-drop"/></svg>
        <svg class="w-2 h-1.5 mt-1 mb-[5px] shrink-0" viewBox="0 0 8 6"><path d="M1 5l3-3 3 3" fill="none" stroke="#ccc"/></svg>
        <div class="w-4 h-[486px] mt-0.5 shrink-0 flex flex-col overflow-hidden *:h-4 *:shrink-0">
          <svg class="w-4"><use href="#i-x"/></svg>
          <div class="bg-black"></div>
          <div class="bg-[#1a1a1a]"></div>
          <div class="bg-[#333333]"></div>
          <div class="bg-[#4d4d4d]"></div>
          <div class="bg-[#666666]"></div>
          <div class="bg-[#808080]"></div>
          <div class="bg-[#999999]"></div>
          <div class="bg-[#b3b3b3]"></div>
          <div class="bg-[#c8c8c8]"></div>
          <div class="bg-[#e6e6e6]"></div>
          <div class="bg-white"></div>
          <div class="bg-[#0000f5]"></div>
          <div class="bg-[#12ecff]"></div>
          <div class="bg-[#0bf00b]"></div>
          <div class="bg-[#ffff10]"></div>
          <div class="bg-[#e00a0a]"></div>
          <div class="bg-[#fb02fb]"></div>
          <div class="bg-[#9a00cc]"></div>
          <div class="bg-[#ff6600]"></div>
          <div class="bg-[#f797c8]"></div>
          <div class="bg-[#663233]"></div>
          <div class="bg-[#c8c4f4]"></div>
          <div class="bg-[#9995ee]"></div>
          <div class="bg-[#6496fa]"></div>
          <div class="bg-[#6660fa]"></div>
          <div class="bg-[#6460cc]"></div>
          <div class="bg-[#003095]"></div>
          <div class="bg-[#000066]"></div>
          <div class="bg-[#336097]"></div>
          <div class="bg-[#10bfe6]"></div>
        </div>
        <svg class="w-2.5 h-1.5 mt-1.5 shrink-0" viewBox="0 0 10 6"><path d="M1 1l4 4 4-4" fill="none" stroke="#aaa" stroke-width="1.300"/></svg>
        <svg class="w-2.5 h-2 mt-2 shrink-0" viewBox="0 0 10 8"><path d="M1 1l3 3-3 3M5 1l3 3-3 3" fill="none" stroke="#bbb"/></svg>
      </div>
    </div>

    <!-- Status bar -->
    <div class="h-[31px] shrink-0 bg-[#f3f3f3] border-t border-[#ddd] flex items-center pl-[7px] pb-0.5">
      <span class="w-[94px] tracking-[-0.4px]">( 34,299; 250,977 )</span>
      <svg class="w-3.5 h-3.5" viewBox="0 0 14 14"><path d="M1 1h12v12H1z" fill="#fff" stroke="#555" stroke-width="1.300"/><path d="M5 3.500v7l5-3.500z" fill="#000"/></svg>
      <span class="w-[379px] ml-[35px] tracking-[-0.22px]">Выделено объектов: 3 вкл. Слой 1</span>
      <svg class="w-3.5 h-3.5" viewBox="0 0 14 14"><path d="M0 1h14v10l-3 3H3l-3-3z" fill="#999da6"/><path d="M4 4h6v6H4z" fill="none" stroke="#5c606c"/><path d="M5 5l4 4" stroke="#5c606c"/></svg>
      <svg class="w-4 h-4 ml-3" viewBox="0 0 16 16"><path d="M2 8l6-5 6 5-6 6z" fill="#eee" stroke="#444" stroke-width="1.500"/><path d="M4 9h8l-4 4z" fill="#c49a2e"/><path d="M14 8v4M8 1v5" stroke="#444"/></svg>
      <svg class="w-4 h-[17px] ml-1" viewBox="0 0 16 17"><path d="M.5.500h15v16H.5z" fill="#fff" stroke="#bbb"/><path d="M1 1l14 15" stroke="#a8304a" stroke-width="1.500"/></svg>
      <span class="w-[156px] ml-1 tracking-[-0.25px]">Цвет заливки</span>
      <svg class="w-4 h-4 mr-[5px]"><use href="#i-pen"/></svg>
      <div class="w-4 h-4 bg-black mr-[3px]"></div>
      <span class="tracking-[-0.3px]">R:0 G:0 B:0 (#000000)&nbsp; 0,200 ...</span>
    </div>
  </div>

</body>
</html>
